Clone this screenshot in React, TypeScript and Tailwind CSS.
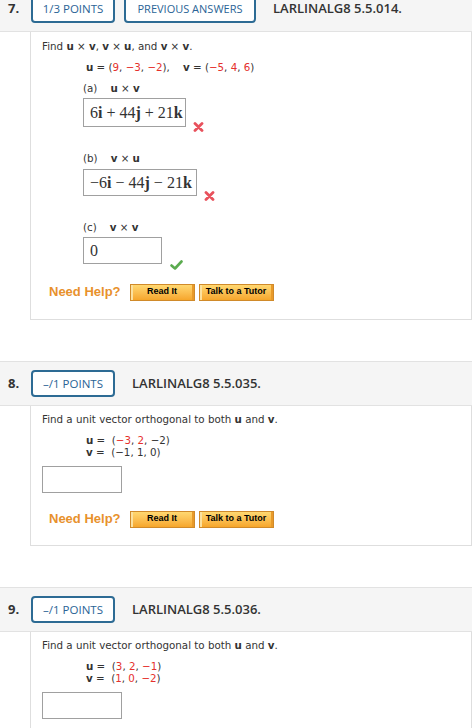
import React from 'react';

type Part = { t: string; red?: boolean };

const body = "font-['DejaVu_Sans',sans-serif] text-[10.3px] text-[#333]";

const Header = ({ num, title, points, prev, first }: { num: string; title: string; points: string; prev?: boolean; first?: boolean }) => (
  <div
    className={
      "flex h-[45px] items-center border-b border-[#e2e2e2] bg-[#f5f5f5] font-['Open_Sans',sans-serif] " +
      (first ? "mt-[-13px]" : "border-t")
    }
  >
    <span className="w-[31px] pl-[8px] text-[13px] font-bold text-[#333]">{num}</span>
    <div className="flex h-[27px] w-[84px] items-center justify-center rounded-[4px] border-2 border-[#2d6b94] bg-white text-[11.5px] text-[#2a6496]">
      {points}
    </div>
    {prev && (
      <div className="ml-[9px] flex h-[27px] w-[132px] items-center justify-center rounded-[4px] border-2 border-[#2d6b94] bg-white text-[11px] text-[#2a6496]">
        PREVIOUS ANSWERS
      </div>
    )}
    <span className="ml-[17px] text-[13px] font-semibold text-[#333]">{title}</span>
  </div>
);

const Cross = () => (
  <svg width="11" height="10" viewBox="0 0 11 10" className="mb-[-5px] ml-[7px]">
    <path d="M2 1.5 L9 8.5 M9 1.5 L2 8.5" stroke="#e8515c" strokeWidth="2.8" strokeLinecap="round" />
  </svg>
);

const Check = () => (
  <svg width="13" height="10" viewBox="0 0 13 10" className="mb-[-6px] ml-[8px]">
    <path d="M1.5 5.5 L5 8.5 L11.5 1.5" stroke="#5bab4f" strokeWidth="2.6" fill="none" strokeLinecap="round" strokeLinejoin="round" />
  </svg>
);

const Vec = ({ name, parts, wide }: { name: string; parts: Part[]; wide?: boolean }) => (
  <span className="whitespace-pre">
    <b>{name}</b>
    {wide ? " =  (" : " = ("}
    {parts.map((p, i) => (
      <React.Fragment key={i}>
        {i > 0 && ", "}
        <span className={p.red ? "text-[#e5302c]" : ""}>{p.t}</span>
      </React.Fragment>
    ))}
    {")"}
  </span>
);

const Op = ({ c }: { c: string }) => <span className="mx-[4px]">{c}</span>;

const helpBtn =
  "flex h-[17px] items-center justify-center border border-[#d08a2a] bg-gradient-to-b from-[#ffd870] to-[#f6a62a] shadow-[inset_2px_0_0_#fbe1a0,inset_-2px_0_0_#e89a2a] text-[9px] font-bold text-black";

const HelpRow = () => (
  <div className="flex h-[20px] items-center pl-[7px] font-['Liberation_Sans',sans-serif]">
    <span className="text-[13px] font-bold text-[#e8912c]">Need Help?</span>
    <div className={helpBtn + " ml-[9px] w-[65px]"}>Read It</div>
    <div className={helpBtn + " ml-[4px] w-[75px]"}>Talk to a Tutor</div>
  </div>
);

const MathBox = ({ w, h, children }: { w: string; h: string; children?: React.ReactNode }) => (
  <div className={"flex items-center whitespace-nowrap border border-[#a0a0a0] bg-white pl-[6px] font-['Liberation_Serif',serif] text-[16px] text-[#333] " + w + " " + h}>
    {children}
  </div>
);

const Panel = ({ children, h }: { children: React.ReactNode; h: string }) => (
  <div className={"ml-[30px] border-b border-l border-r border-[#dedede] pl-[11px] " + h}>{children}</div>
);

export default function App() {
  return (
    <div className="min-h-[728px] w-[474px] overflow-hidden bg-white">
      <div className="w-[472px]">
        {/* question 7 */}
        <Header first num="7." points="1/3 POINTS" prev title="LARLINALG8 5.5.014." />
        <Panel h="h-[288px]">
          <div className={body + " pt-[7px]"}>
            <div className="leading-[14px]">
              Find <b>u</b> × <b>v</b>, <b>v</b> × <b>u</b>, and <b>v</b> × <b>v</b>.
            </div>
            <div className="mt-[7px] whitespace-pre pl-[44px] leading-[14px]">
              <Vec name="u" parts={[{ t: "9", red: true }, { t: "−3", red: true }, { t: "−2", red: true }]} />
              {",    "}
              <Vec name="v" parts={[{ t: "−5", red: true }, { t: "4", red: true }, { t: "6", red: true }]} />
            </div>
            <div className="pl-[41px]">
              <div className="mt-[7px] whitespace-pre leading-[14px]">
                {"(a)    "}
                <b>u</b> × <b>v</b>
              </div>
              <div className="mt-[3px] flex items-end">
                <MathBox w="w-[103px]" h="h-[29px]">
                  6<b>i</b>
                  <Op c="+" />
                  44<b>j</b>
                  <Op c="+" />
                  21<b>k</b>
                </MathBox>
                <Cross />
              </div>
              <div className="mt-[24px] whitespace-pre leading-[14px]">
                {"(b)    "}
                <b>v</b> × <b>u</b>
              </div>
              <div className="mt-[4px] flex items-end">
                <MathBox w="w-[114px]" h="h-[27px]">
                  −6<b>i</b>
                  <Op c="−" />
                  44<b>j</b>
                  <Op c="−" />
                  21<b>k</b>
                </MathBox>
                <Cross />
              </div>
              <div className="mt-[24px] whitespace-pre leading-[14px]">
                {"(c)    "}
                <b>v</b> × <b>v</b>
              </div>
              <div className="mt-[3px] flex items-end">
                <MathBox w="w-[79px]" h="h-[27px]">0</MathBox>
                <Check />
              </div>
            </div>
          </div>
          <div className="mt-[18px]">
            <HelpRow />
          </div>
        </Panel>

        {/* question 8 */}
        <div className="mt-[41px]">
          <Header num="8." points="–/1 POINTS" title="LARLINALG8 5.5.035." />
        </div>
        <Panel h="h-[140px]">
          <div className={body + " pt-[6px]"}>
            <div className="leading-[14px]">
              Find a unit vector orthogonal to both <b>u</b> and <b>v</b>.
            </div>
            <div className="mt-[8px] pl-[44px] leading-[12px]">
              <div>
                <Vec wide name="u" parts={[{ t: "−3", red: true }, { t: "2", red: true }, { t: "−2" }]} />
              </div>
              <div>
                <Vec wide name="v" parts={[{ t: "−1" }, { t: "1" }, { t: "0" }]} />
              </div>
            </div>
            <div className="mt-[8px] h-[27px] w-[80px] border border-[#a0a0a0]" />
          </div>
          <div className="mt-[16px]">
            <HelpRow />
          </div>
        </Panel>

        {/* question 9 */}
        <div className="mt-[41px]">
          <Header num="9." points="–/1 POINTS" title="LARLINALG8 5.5.036." />
        </div>
        <Panel h="h-[120px]">
          <div className={body + " pt-[6px]"}>
            <div className="leading-[14px]">
              Find a unit vector orthogonal to both <b>u</b> and <b>v</b>.
            </div>
            <div className="mt-[8px] pl-[44px] leading-[12px]">
              <div>
                <Vec wide name="u" parts={[{ t: "3", red: true }, { t: "2", red: true }, { t: "−1", red: true }]} />
              </div>
              <div>
                <Vec wide name="v" parts={[{ t: "1", red: true }, { t: "0", red: true }, { t: "−2", red: true }]} />
              </div>
            </div>
            <div className="mt-[8px] h-[27px] w-[80px] border border-[#a0a0a0]" />
          </div>
        </Panel>
      </div>
    </div>
  );
}
